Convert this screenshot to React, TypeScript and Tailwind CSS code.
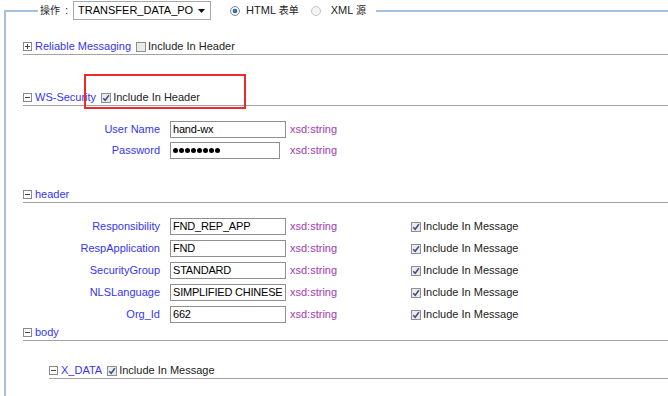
import React from 'react';

const blue = 'text-[#3535f2]';
const purple = 'text-[#a23ab2]';

function Box({ checked }: { checked?: boolean }) {
  return (
    <span className="inline-flex h-[10px] w-[10px] shrink-0 items-center justify-center border border-[#8d8e90] bg-[#e9eaec]">
      {checked && (
        <svg width="8" height="8" viewBox="0 0 8 8">
          <path d="M1.2 4.2 L3.2 6.3 L6.9 1.3" fill="none" stroke="#3b4f86" strokeWidth="1.5" />
        </svg>
      )}
    </span>
  );
}

function Toggle({ open }: { open?: boolean }) {
  return (
    <span className="inline-flex h-[9px] w-[9px] shrink-0 items-center justify-center border border-[#8a8a8a] bg-white">
      <svg width="7" height="7" viewBox="0 0 7 7">
        <path d="M1 3.5 H6" stroke="#444" strokeWidth="1" />
        {!open && <path d="M3.5 1 V6" stroke="#444" strokeWidth="1" />}
      </svg>
    </span>
  );
}

function Radio({ on }: { on?: boolean }) {
  return (
    <svg width="10" height="10" viewBox="0 0 10 10" className="shrink-0">
      <circle cx="5" cy="5" r="4.5" fill="#f4f4f4" stroke={on ? '#8a8a8a' : '#c4c4c4'} />
      {on && <circle cx="5" cy="5" r="2.3" fill="#2f6fb8" />}
    </svg>
  );
}

function Section({ title, open, check, checked, indent = false }: { title: string; open?: boolean; check?: string; checked?: boolean; indent?: boolean }) {
  return (
    <div className={`flex h-[16px] items-center border-b border-[#a3a3a3] ${indent ? 'ml-[26px]' : ''}`}>
      <Toggle open={open} />
      <span className={`ml-[3px] ${blue}`}>{title}</span>
      {check && (
        <span className="ml-[5px] flex items-center">
          <Box checked={checked} />
          <span className="ml-[2px] text-[#222]">{check}</span>
        </span>
      )}
    </div>
  );
}

function Field({ label, value, width = 116, secret, msg, className = '' }: { label: string; value?: string; width?: number; secret?: boolean; msg?: boolean; className?: string }) {
  return (
    <div className={`flex h-[17px] items-center ${className}`}>
      <span className={`w-[137px] text-right ${blue}`}>{label}</span>
      <div className="ml-[10px] w-[120px]">
        <div
          className="flex h-[17px] items-center overflow-hidden whitespace-nowrap border border-[#8f8f8f] bg-white pl-[2px] tracking-[-0.2px] text-black"
          style={{ width }}
        >
          {secret ? (
            <span className="flex gap-[1px]">
              {Array.from({ length: 8 }).map((_, i) => (
                <span key={i} className="h-[5px] w-[5px] rounded-full bg-black" />
              ))}
            </span>
          ) : (
            value
          )}
        </div>
      </div>
      <span className={`w-[121px] ${purple}`}>xsd:string</span>
      {msg && (
        <span className="flex items-center">
          <Box checked />
          <span className="ml-[2px] text-[#222]">Include In Message</span>
        </span>
      )}
    </div>
  );
}

export default function App() {
  const header = [
    ['Responsibility', 'FND_REP_APP'],
    ['RespApplication', 'FND'],
    ['SecurityGroup', 'STANDARD'],
    ['NLSLanguage', 'SIMPLIFIED CHINESE'],
    ['Org_Id', '662'],
  ];

  return (
    <div className="relative h-[396px] w-[668px] overflow-hidden bg-white font-['Liberation_Sans','Noto_Sans_CJK_SC',sans-serif] text-[11px] leading-none">
      <fieldset className="ml-[4px] mt-[1px] w-[700px] border-l-2 border-t-2 border-[#a4c2df] pb-[40px]">
        <legend className="ml-[32px] px-[2px]">
          <div className="flex h-[19px] items-center text-[#222]">
            <span className="text-[10px]">操作</span>
            <span className="ml-[5px] mr-[5px]">:</span>
            <div className="flex h-[19px] w-[138px] items-center justify-between border border-[#a8a8a8] bg-white pl-[4px] pr-[5px] text-black">
              <span>TRANSFER_DATA_PO</span>
              <svg width="7" height="4" viewBox="0 0 7 4">
                <path d="M0 0 H7 L3.5 4 Z" fill="#111" />
              </svg>
            </div>
            <span className="ml-[19px]"><Radio on /></span>
            <span className="ml-[6px]">HTML <span className="text-[10px]">表单</span></span>
            <span className="ml-[12px]"><Radio /></span>
            <span className="ml-[10px]">XML <span className="text-[10px]">源</span></span>
            <span className="w-[8px]" />
          </div>
        </legend>

        <div className="ml-[17px]">
          <div className="mt-[19px]">
            <Section title="Reliable Messaging" check="Include In Header" />
          </div>

          <div className="mt-[35px]">
            <Section title="WS-Security" open check="Include In Header" checked />
          </div>
          <Field label="User Name" value="hand-wx" className="mt-[15px]" />
          <Field label="Password" secret width={110} className="mt-[4px]" />

          <div className="mt-[28px]">
            <Section title="header" open />
          </div>
          <div className="mt-[15px] flex flex-col gap-[5px]">
            {header.map(([l, v]) => (
              <Field key={l} label={l} value={v} msg />
            ))}
          </div>

          <div className="mt-[2px]">
            <Section title="body" open />
          </div>
          <div className="mt-[22px]">
            <Section title="X_DATA" open check="Include In Message" checked indent />
          </div>
        </div>
      </fieldset>

      <div className="absolute left-[84px] top-[74px] h-[35px] w-[162px] border-2 border-[#ec2a2a]" />
    </div>
  );
}
